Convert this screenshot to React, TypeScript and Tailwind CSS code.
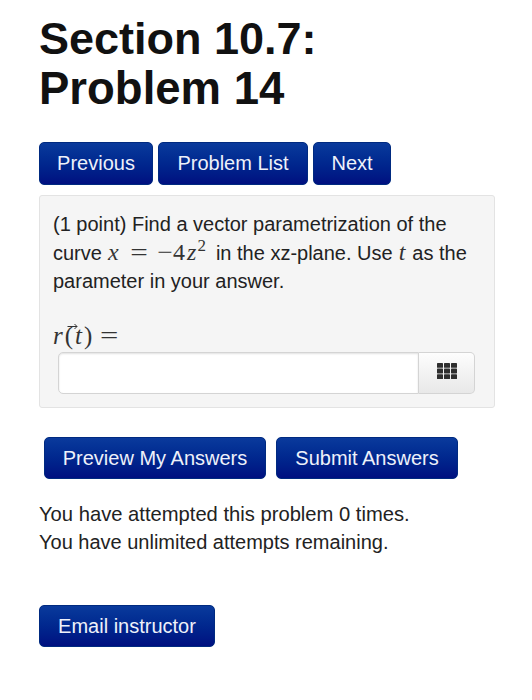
import React from 'react';

const btn =
  "inline-flex items-center justify-center rounded-[5px] border border-[#002a80] bg-gradient-to-b from-[#0a3a9c] to-[#000f80] text-[#eef1fa] text-[20px] leading-none pb-[1px]";

const mathFont = "font-['Liberation_Serif',serif] text-[#333]";

const App: React.FC = () => {
  return (
    <div className="w-[532px] h-[700px] bg-white pl-[39px] pr-[37px] pt-[14px] font-['Liberation_Sans',Arial,sans-serif] text-[#222] overflow-hidden">
      <h1 className="text-[45px] leading-[50px] font-bold text-[#111]">
        Section 10.7:
        <br />
        <span className="text-[45.5px]">Problem 14</span>
      </h1>

      {/* Nav buttons */}
      <div className="flex gap-[5px] mt-[28px]">
        <button className={`${btn} h-[43px] w-[114px]`}>Previous</button>
        <button className={`${btn} h-[43px] w-[150px]`}>Problem List</button>
        <button className={`${btn} h-[43px] w-[78px]`}>Next</button>
      </div>

      {/* Problem panel */}
      <div className="mt-[10px] h-[213px] rounded-[3px] border border-[#e3e3e3] bg-[#f5f5f5] pt-[14px] pl-[13px] pr-[19px]">
        <div className="text-[20px] leading-[28.5px] whitespace-nowrap">
          <p>(1 point) Find a vector parametrization of the</p>
          <p className="flex items-baseline">
            <span>curve</span>
            <span className={`${mathFont} flex items-baseline ml-[6px] text-[24px] leading-none`}>
              <i>x</i>
              <span className="inline-block w-[14px] text-center scale-x-[1.3] ml-[13px]">=</span>
              <span className="inline-block w-[14px] text-center scale-x-[1.15] ml-[12px]">−</span>
              <span className="ml-[1.5px]">4</span>
              <i className="ml-[2px]">z</i>
              <sup className="text-[17px] leading-none top-[-9px] ml-[1px]">2</sup>
            </span>
            <span className="ml-[10px]">in the xz-plane. Use</span>
            <i className={`${mathFont} ml-[6px] text-[24px] leading-none`}>t</i>
            <span className="ml-[7px]">as the</span>
          </p>
          <p>parameter in your answer.</p>
        </div>

        <div className={`${mathFont} flex items-baseline mt-[26px] h-[28px] text-[25px] leading-[28px]`}>
          <i>r</i>
          <span className="ml-[2px]">(</span>
          <span className="relative ml-[2px]">
            <i>t</i>
            <svg
              className="absolute left-[-8px] top-[1px]"
              width="11"
              height="7"
              viewBox="0 0 11 7"
              fill="none"
              stroke="#333"
              strokeWidth="1"
            >
              <path d="M0.5 3.5H10M7.5 1L10 3.5L7.5 6" />
            </svg>
          </span>
          <span className="ml-[2px]">)</span>
          <span className="inline-block w-[14px] text-center scale-x-[1.3] ml-[10px]">=</span>
        </div>

        {/* Answer input with addon */}
        <div className="flex mt-[2px] ml-[5px] h-[42px]">
          <input
            type="text"
            className="w-[361px] h-full rounded-l-[5px] border border-[#d4d4d4] bg-white shadow-[inset_0_1px_2px_rgba(0,0,0,0.12)]"
          />
          <div className="flex items-center justify-center w-[56px] h-full rounded-r-[5px] border border-l-0 border-[#d4d4d4] bg-gradient-to-b from-[#fdfdfd] to-[#e8e8e8]">
            <svg className="mb-[3px]" width="20" height="16" viewBox="0 0 20 16" fill="#2e2e2e">
              {[0, 5.6, 11.2].map((y) =>
                [0, 7, 14].map((x) => <rect key={`${x}-${y}`} x={x} y={y} width="6" height="4.8" rx="0.6" />)
              )}
            </svg>
          </div>
        </div>
      </div>

      {/* Submit buttons */}
      <div className="flex gap-[10px] mt-[29px] ml-[5px]">
        <button className={`${btn} h-[42px] w-[222px]`}>Preview My Answers</button>
        <button className={`${btn} h-[42px] w-[182px]`}>Submit Answers</button>
      </div>

      <p className="mt-[21px] text-[20px] leading-[28px]">
        <span className="text-[20.2px]">You have attempted this problem 0 times.</span>
        <br />
        You have unlimited attempts remaining.
      </p>

      <button className={`${btn} h-[42px] w-[176px] mt-[49px]`}>Email instructor</button>
    </div>
  );
};

export default App;
